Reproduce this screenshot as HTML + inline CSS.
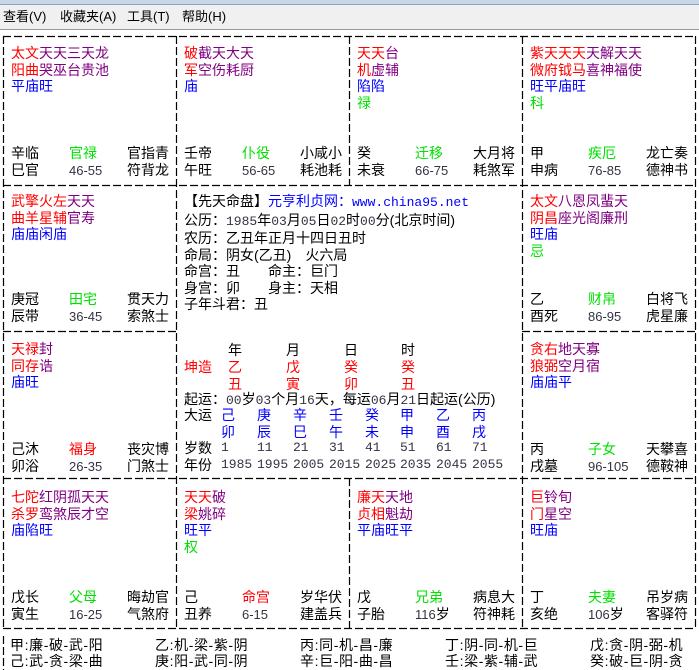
<!DOCTYPE html>
<html><head><meta charset="utf-8"><style>
*{margin:0;padding:0}
body{width:699px;height:670px;overflow:hidden;background:#fff;position:relative;font-family:"Liberation Sans","Noto Sans CJK SC","WenQuanYi Zen Hei",sans-serif;font-size:14px;color:#000}
.a{position:absolute;white-space:nowrap;line-height:16.5px}
.r{color:#f00}.p{color:#800080}.b{color:#00f}.g{color:#00e000}
.n{color:#334;font-family:"Liberation Sans",sans-serif;font-size:13px}
.c{color:#334;font-family:"Liberation Mono",monospace;font-size:13px}
.m{font-size:13px}
.bt{letter-spacing:0.6px}
</style></head><body>
<div style="position:absolute;left:0;top:0;width:699px;height:4px;background:#c8d7e8;border-bottom:1px solid #8fa3b8"></div>
<div style="position:absolute;left:0;top:5px;width:699px;height:24px;background:#f0f0f0;border-bottom:1px solid #999"></div>
<div class="a m" style="left:3px;top:9px">查看(V)</div>
<div class="a m" style="left:60px;top:9px">收藏夹(A)</div>
<div class="a m" style="left:127px;top:9px">工具(T)</div>
<div class="a m" style="left:182px;top:9px">帮助(H)</div>

<svg style="position:absolute;left:0;top:0" width="699" height="670">
<g stroke="#000" stroke-width="1.2" stroke-dasharray="8,3" fill="none">
<line x1="3" y1="36.5" x2="695" y2="36.5"/>
<line x1="3" y1="185.5" x2="695" y2="185.5"/>
<line x1="3" y1="331.5" x2="176" y2="331.5"/><line x1="522" y1="331.5" x2="695" y2="331.5"/>
<line x1="3" y1="478.5" x2="695" y2="478.5"/>
<line x1="3" y1="628.5" x2="695" y2="628.5"/>
<line x1="3.5" y1="36" x2="3.5" y2="628"/>
<line x1="176.5" y1="36" x2="176.5" y2="628"/>
<line x1="349.5" y1="36" x2="349.5" y2="185"/><line x1="349.5" y1="478" x2="349.5" y2="628"/>
<line x1="522.5" y1="36" x2="522.5" y2="628"/>
<line x1="695.5" y1="36" x2="695.5" y2="628"/>
<line x1="3.5" y1="636" x2="3.5" y2="670"/>
</g></svg>

<!-- Row 1 -->
<div class="a" style="left:11px;top:45px"><span class="r">太文</span><span class="p">天天三天龙</span><br><span class="r">阳曲</span><span class="p">哭巫台贵池</span><br><span class="b">平庙旺</span></div>
<div class="a" style="left:11px;top:145px">辛临<br>巳官</div>
<div class="a" style="left:69px;top:145px"><span class="g">官禄</span><br><span class="n">46-55</span></div>
<div class="a" style="left:127px;top:145px">官指青<br>符背龙</div>

<div class="a" style="left:184px;top:45px"><span class="r">破</span><span class="p">截天大天</span><br><span class="r">军</span><span class="p">空伤耗厨</span><br><span class="b">庙</span></div>
<div class="a" style="left:184px;top:145px">壬帝<br>午旺</div>
<div class="a" style="left:242px;top:145px"><span class="g">仆役</span><br><span class="n">56-65</span></div>
<div class="a" style="left:300px;top:145px">小咸小<br>耗池耗</div>

<div class="a" style="left:357px;top:45px"><span class="r">天天</span><span class="p">台</span><br><span class="r">机</span><span class="p">虚辅</span><br><span class="b">陷陷</span><br><span class="g">禄</span></div>
<div class="a" style="left:357px;top:145px">癸<br>未衰</div>
<div class="a" style="left:415px;top:145px"><span class="g">迁移</span><br><span class="n">66-75</span></div>
<div class="a" style="left:473px;top:145px">大月将<br>耗煞军</div>

<div class="a" style="left:530px;top:45px"><span class="r">紫天天天</span><span class="p">天解天天</span><br><span class="r">微府钺马</span><span class="p">喜神福使</span><br><span class="b">旺平庙旺</span><br><span class="g">科</span></div>
<div class="a" style="left:530px;top:145px">甲<br>申病</div>
<div class="a" style="left:588px;top:145px"><span class="g">疾厄</span><br><span class="n">76-85</span></div>
<div class="a" style="left:646px;top:145px">龙亡奏<br>德神书</div>

<!-- Row 2 -->
<div class="a" style="left:11px;top:193px"><span class="r">武擎火左</span><span class="p">天天</span><br><span class="r">曲羊星辅</span><span class="p">官寿</span><br><span class="b">庙庙闲庙</span></div>
<div class="a" style="left:11px;top:291px">庚冠<br>辰带</div>
<div class="a" style="left:69px;top:291px"><span class="g">田宅</span><br><span class="n">36-45</span></div>
<div class="a" style="left:127px;top:291px">贯天力<br>索煞士</div>

<div class="a" style="left:530px;top:193px"><span class="r">太文</span><span class="p">八恩凤蜚天</span><br><span class="r">阴昌</span><span class="p">座光阁廉刑</span><br><span class="b">旺庙</span><br><span class="g">忌</span></div>
<div class="a" style="left:530px;top:291px">乙<br>酉死</div>
<div class="a" style="left:588px;top:291px"><span class="g">财帛</span><br><span class="n">86-95</span></div>
<div class="a" style="left:646px;top:291px">白将飞<br>虎星廉</div>

<!-- Center -->
<div class="a" style="left:184px;top:193px">【先天命盘】<span class="b">元亨利贞网：</span><span class="b" style="font-family:'Liberation Mono',monospace;font-size:13px">www.china95.net</span><br>公历：<span class="c">1985</span>年<span class="c">03</span>月<span class="c">05</span>日<span class="c">02</span>时<span class="c">00</span>分(北京时间)<br>农历：乙丑年正月十四日丑时<br>命局：阴女(乙丑)　火六局<br>命宫：丑　　命主：巨门<br>身宫：卯　　身主：天相<br>子年斗君：丑</div>
<div class="a" style="left:228px;top:342px">年</div>
<div class="a" style="left:286px;top:342px">月</div>
<div class="a" style="left:344px;top:342px">日</div>
<div class="a" style="left:401px;top:342px">时</div>
<div class="a r" style="left:184px;top:359px">坤造</div>
<div class="a r" style="left:228px;top:359px">乙<br>丑</div>
<div class="a r" style="left:286px;top:359px">戊<br>寅</div>
<div class="a r" style="left:344px;top:359px">癸<br>卯</div>
<div class="a r" style="left:401px;top:359px">癸<br>丑</div>
<div class="a" style="left:184px;top:391px">起运：<span class="c">00</span>岁<span class="c">03</span>个月<span class="c">16</span>天，每运<span class="c">06</span>月<span class="c">21</span>日起运(公历)</div>
<div class="a" style="left:184px;top:407px">大运</div>
<div class="a b" style="left:221px;top:407px">己<br>卯</div>
<div class="a b" style="left:257px;top:407px">庚<br>辰</div>
<div class="a b" style="left:293px;top:407px">辛<br>巳</div>
<div class="a b" style="left:329px;top:407px">壬<br>午</div>
<div class="a b" style="left:365px;top:407px">癸<br>未</div>
<div class="a b" style="left:400px;top:407px">甲<br>申</div>
<div class="a b" style="left:436px;top:407px">乙<br>酉</div>
<div class="a b" style="left:472px;top:407px">丙<br>戌</div>
<div class="a" style="left:184px;top:440px">岁数<br>年份</div>
<div class="a c" style="left:221px;top:440px">1<br>1985</div>
<div class="a c" style="left:257px;top:440px">11<br>1995</div>
<div class="a c" style="left:293px;top:440px">21<br>2005</div>
<div class="a c" style="left:329px;top:440px">31<br>2015</div>
<div class="a c" style="left:365px;top:440px">41<br>2025</div>
<div class="a c" style="left:400px;top:440px">51<br>2035</div>
<div class="a c" style="left:436px;top:440px">61<br>2045</div>
<div class="a c" style="left:472px;top:440px">71<br>2055</div>

<!-- Row 3 -->
<div class="a" style="left:11px;top:341px"><span class="r">天禄</span><span class="p">封</span><br><span class="r">同存</span><span class="p">诰</span><br><span class="b">庙旺</span></div>
<div class="a" style="left:11px;top:441px">己沐<br>卯浴</div>
<div class="a" style="left:69px;top:441px"><span class="r">福身</span><br><span class="n">26-35</span></div>
<div class="a" style="left:127px;top:441px">丧灾博<br>门煞士</div>

<div class="a" style="left:530px;top:341px"><span class="r">贪右</span><span class="p">地天寡</span><br><span class="r">狼弼</span><span class="p">空月宿</span><br><span class="b">庙庙平</span></div>
<div class="a" style="left:530px;top:441px">丙<br>戌墓</div>
<div class="a" style="left:588px;top:441px"><span class="g">子女</span><br><span class="n">96-105</span></div>
<div class="a" style="left:646px;top:441px">天攀喜<br>德鞍神</div>

<!-- Row 4 -->
<div class="a" style="left:11px;top:489px"><span class="r">七陀</span><span class="p">红阴孤天天</span><br><span class="r">杀罗</span><span class="p">鸾煞辰才空</span><br><span class="b">庙陷旺</span></div>
<div class="a" style="left:11px;top:589px">戊长<br>寅生</div>
<div class="a" style="left:69px;top:589px"><span class="g">父母</span><br><span class="n">16-25</span></div>
<div class="a" style="left:127px;top:589px">晦劫官<br>气煞府</div>

<div class="a" style="left:184px;top:489px"><span class="r">天天</span><span class="p">破</span><br><span class="r">梁</span><span class="p">姚碎</span><br><span class="b">旺平</span><br><span class="g">权</span></div>
<div class="a" style="left:184px;top:589px">己<br>丑养</div>
<div class="a" style="left:242px;top:589px"><span class="r">命宫</span><br><span class="n">6-15</span></div>
<div class="a" style="left:300px;top:589px">岁华伏<br>建盖兵</div>

<div class="a" style="left:357px;top:489px"><span class="r">廉天</span><span class="p">天地</span><br><span class="r">贞相</span><span class="p">魁劫</span><br><span class="b">平庙旺平</span></div>
<div class="a" style="left:357px;top:589px">戊<br>子胎</div>
<div class="a" style="left:415px;top:589px"><span class="g">兄弟</span><br><span class="n">116</span>岁</div>
<div class="a" style="left:473px;top:589px">病息大<br>符神耗</div>

<div class="a" style="left:530px;top:489px"><span class="r">巨</span><span class="p">铃旬</span><br><span class="r">门</span><span class="p">星空</span><br><span class="b">旺庙</span></div>
<div class="a" style="left:530px;top:589px">丁<br>亥绝</div>
<div class="a" style="left:588px;top:589px"><span class="g">夫妻</span><br><span class="n">106</span>岁</div>
<div class="a" style="left:646px;top:589px">吊岁病<br>客驿符</div>

<!-- Bottom -->
<div class="a bt" style="left:10px;top:637px;line-height:16px">甲:廉-破-武-阳<br>己:武-贪-梁-曲</div>
<div class="a bt" style="left:155px;top:637px;line-height:16px">乙:机-梁-紫-阴<br>庚:阳-武-同-阴</div>
<div class="a bt" style="left:300px;top:637px;line-height:16px">丙:同-机-昌-廉<br>辛:巨-阳-曲-昌</div>
<div class="a bt" style="left:445px;top:637px;line-height:16px">丁:阴-同-机-巨<br>壬:梁-紫-辅-武</div>
<div class="a bt" style="left:590px;top:637px;line-height:16px">戊:贪-阴-弼-机<br>癸:破-巨-阴-贪</div>
</body></html>
